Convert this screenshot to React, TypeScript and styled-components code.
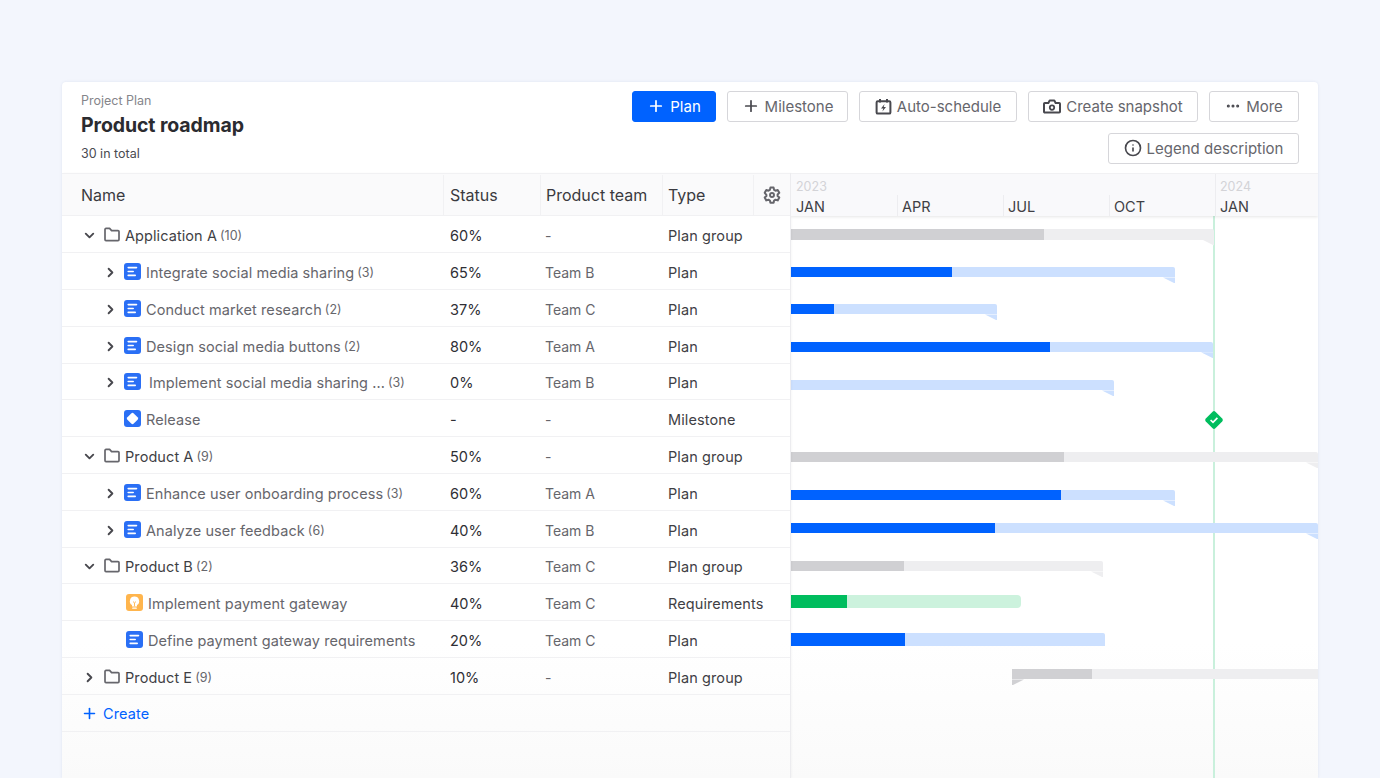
import React from "react";
import styled, { createGlobalStyle } from "styled-components";
import { ChevronDown, ChevronRight, Plus, Ellipsis, Info } from "lucide-react";

const Global = createGlobalStyle`
  html, body { margin: 0; padding: 0; height: 100%; }
  body { background: #f3f6fd; font-family: Inter, "Liberation Sans", sans-serif; overflow: hidden; }
  #root { height: 100%; }
`;

const Page = styled.div`
  height: 778px;
  padding: 82px 62px 0;
  box-sizing: border-box;
  overflow: hidden;
`;
const Card = styled.main`
  height: 696px;
  background: #fff;
  border-radius: 4px 4px 0 0;
  box-shadow: 0 0 3px rgba(40, 60, 120, 0.1);
  display: flex;
  flex-direction: column;
`;
const TopBar = styled.header`
  height: 91px;
  flex: none;
  display: flex;
  justify-content: space-between;
  padding: 9px 19px 0;
  box-sizing: border-box;
`;
const TitleBlock = styled.div`
  display: flex;
  flex-direction: column;
  padding-top: 1px;
`;
const Crumb = styled.div`
  font-size: 12.5px;
  line-height: 18px;
  color: #85858a;
`;
const Title = styled.h1`
  margin: 2px 0 0;
  font-size: 19.5px;
  line-height: 26px;
  font-weight: 700;
  color: #2b2b30;
  letter-spacing: -0.1px;
`;
const Total = styled.div`
  margin-top: 7px;
  font-size: 12.5px;
  line-height: 18px;
  color: #4a4a50;
`;
const Tools = styled.div`
  display: flex;
  flex-direction: column;
  align-items: flex-end;
  gap: 11px;
`;
const ToolRow = styled.div`
  display: flex;
  gap: 11px;
`;
const Btn = styled.button<{ $w: number; $primary?: boolean }>`
  width: ${(p) => p.$w}px;
  height: 31px;
  box-sizing: border-box;
  display: flex;
  align-items: center;
  justify-content: center;
  gap: 5px;
  padding: 0 0 1px;
  border-radius: 3px;
  border: 1px solid ${(p) => (p.$primary ? "#0062ff" : "#d6d6da")};
  background: ${(p) => (p.$primary ? "#0062ff" : "#fff")};
  color: ${(p) => (p.$primary ? "#fff" : "#66666c")};
  font: 400 15px Inter, sans-serif;
  svg { flex: none; color: ${(p) => (p.$primary ? "#fff" : "#48484e")}; }
`;
const Body = styled.div`
  flex: 1;
  display: flex;
  min-height: 0;
  background: linear-gradient(#fff 0, #fff 470px, #fafafa 100%);
`;
const TablePane = styled.section`
  width: 729px;
  flex: none;
  box-sizing: border-box;
  border-right: 1px solid #ececef;
  box-shadow: 1px 0 2px rgba(0, 0, 0, 0.03);
  position: relative;
  z-index: 1;
`;
const Cols = "382px 97px 122px 91px 36px";
const HeadRow = styled.div`
  height: 43.4px;
  padding-top: 1px;
  display: grid;
  grid-template-columns: ${Cols};
  background: #fafafb;
  border-top: 1px solid #f1f1f3;
  border-bottom: 1px solid #f1f1f3;
  box-sizing: border-box;
`;
const HeadCell = styled.div<{ $pad?: number }>`
  display: flex;
  align-items: center;
  padding-left: ${(p) => p.$pad ?? 6}px;
  font-size: 16px;
  color: #3a3a40;
  border-right: 1px solid #f1f1f3;
  &:last-child { border-right: 0; padding-left: 9px; }
  svg { color: #66666c; }
`;
const Row = styled.div`
  height: 36.8px;
  box-sizing: border-box;
  padding-top: 3px;
  display: grid;
  grid-template-columns: ${Cols};
  align-items: center;
  border-bottom: 1px solid #f1f1f3;
`;
const NameCell = styled.div<{ $indent: number }>`
  display: flex;
  align-items: center;
  padding-left: ${(p) => p.$indent}px;
  white-space: nowrap;
`;
const Twisty = styled.span`
  width: 16px;
  height: 16px;
  flex: none;
  display: flex;
  align-items: center;
  justify-content: center;
  color: #48484e;
`;
const KindIcon = styled.span<{ $gap: number; $left: number }>`
  display: flex;
  flex: none;
  margin-left: ${(p) => p.$left}px;
  margin-right: ${(p) => p.$gap}px;
  margin-top: -2px;
  color: #66666c;
`;
const Name = styled.span<{ $group?: boolean }>`
  font-size: 14.5px;
  letter-spacing: 0.08px;
  color: ${(p) => (p.$group ? "#3f3f45" : "#66666c")};
`;
const Count = styled.span`
  margin-left: 3px;
  font-size: 12.5px;
  color: #66666c;
`;
const Status = styled.div`
  padding-left: 6px;
  font-size: 14.5px;
  color: #2f2f35;
`;
const Team = styled.div`
  padding-left: 4px;
  font-size: 14px;
  color: #66666c;
`;
const Type = styled.div`
  padding-left: 5px;
  font-size: 14.5px;
  letter-spacing: 0.1px;
  color: #3f3f45;
`;
const CreateRow = styled.div`
  height: 36.8px;
  box-sizing: border-box;
  padding: 2px 0 0 19px;
  display: flex;
  align-items: center;
  gap: 5px;
  border-bottom: 1px solid #f1f1f3;
  color: #0062ff;
  font-size: 14.5px;
  letter-spacing: 0.1px;
`;
const GanttPane = styled.section`
  flex: 1;
  min-width: 0;
  position: relative;
  overflow: hidden;
`;
const GanttHead = styled.div`
  height: 43px;
  box-sizing: border-box;
  display: grid;
  grid-template-columns: repeat(4, 106px) 1fr;
  background: #f9f9fb;
  border-top: 1px solid #f1f1f3;
  box-shadow: 0 1px 3px rgba(0, 0, 0, 0.1);
  position: relative;
  z-index: 2;
`;
const Quarter = styled.div<{ $year?: string }>`
  display: flex;
  flex-direction: column;
  justify-content: flex-end;
  padding-left: 5px;
  position: relative;
  &::before {
    content: "";
    position: absolute;
    left: 0;
    bottom: 0;
    top: ${(p) => (p.$year ? 0 : "21px")};
    width: 1px;
    background: #ededf0;
  }
  &:first-child::before { display: none; }
`;
const Year = styled.span`
  font-size: 12.5px;
  line-height: 18px;
  margin-bottom: 2px;
  color: #d3d3d7;
`;
const Month = styled.span`
  font-size: 14.5px;
  line-height: 18px;
  color: #3f3f45;
`;
const GanttRow = styled.div`
  height: 36.8px;
  display: flex;
  align-items: flex-start;
`;
const Today = styled.div`
  position: absolute;
  left: 422px;
  top: 43px;
  bottom: 0;
  width: 2px;
  background: #c9f0dc;
`;
const Tones = {
  blue: ["#0062ff", "#cce0ff"],
  gray: ["#d0d0d3", "#eeeef0"],
  green: ["#00bd5e", "#ccf2dd"],
} as const;
const Bar = styled.div<{ $tone: keyof typeof Tones; $h: number; $tail?: "left" | "right"; $round?: boolean }>`
  display: flex;
  position: relative;
  height: ${(p) => p.$h}px;
  background: ${(p) => Tones[p.$tone][1]};
  border-radius: ${(p) => (p.$round ? "0 4px 4px 0" : p.$tail === "left" ? "2px 0 0 0" : "0 2px 0 0")};
  ${(p) =>
    p.$tail
      ? `&::after {
    content: "";
    position: absolute;
    top: 100%;
    ${p.$tail}: 0;
    width: 12px;
    height: 6px;
    background: ${p.$tail === "left" ? Tones[p.$tone][0] : Tones[p.$tone][1]};
    clip-path: polygon(${p.$tail === "left" ? "0 0, 100% 0, 0 100%" : "0 0, 100% 0, 100% 100%"});
  }`
      : ""}
`;
const Done = styled.div<{ $tone: keyof typeof Tones }>`
  height: 100%;
  background: ${(p) => Tones[p.$tone][0]};
`;
const Diamond = styled.span`
  display: flex;
  margin: 10.5px 0 0 413px;
  position: relative;
  z-index: 1;
`;

const PlanIcon = () => (
  <svg width="17" height="17" viewBox="0 0 17 17">
    <rect width="17" height="17" rx="3" fill="#2a6ff5" />
    <path d="M4.2 4.6h8.3M4.2 8.5h5M4.2 12.4h7" stroke="#fff" strokeWidth="1.6" strokeLinecap="round" />
  </svg>
);
const ReleaseIcon = () => (
  <svg width="17" height="17" viewBox="0 0 17 17">
    <rect width="17" height="17" rx="3" fill="#2a6ff5" />
    <rect x="4" y="4" width="9" height="9" rx="1.8" fill="#fff" transform="rotate(45 8.5 8.5)" />
  </svg>
);
const BulbIcon = () => (
  <svg width="17" height="17" viewBox="0 0 17 17">
    <rect width="17" height="17" rx="3" fill="#ffb54d" />
    <path d="M8.5 2.6a4.6 4.6 0 0 0-2.5 8.5V12.4h5v-1.3a4.6 4.6 0 0 0-2.5-8.5z" fill="#fff" />
    <path d="M6.8 14.2h3.4" stroke="#fff" strokeWidth="1.3" strokeLinecap="round" />
    <path d="M7 7.6l1.5 1.3L10 7.6M8.5 8.9V12.4" stroke="#ffb54d" strokeWidth="0.9" fill="none" />
  </svg>
);
const BoltCalendar = () => (
  <svg width="17" height="17" viewBox="0 0 17 17" fill="none">
    <rect x="1.6" y="3.2" width="13.8" height="12.4" rx="1.2" stroke="currentColor" strokeWidth="2" />
    <path d="M5 1v3.4M12 1v3.4" stroke="currentColor" strokeWidth="2" />
    <path d="M9.6 6L6 10.4h2.3l-.9 3.2 3.6-4.5H8.7z" fill="currentColor" />
  </svg>
);
const CameraIcon = () => (
  <svg width="18" height="17" viewBox="0 0 18 17" fill="none">
    <path d="M1.8 5h3.6l1.3-2.6h4.6L12.6 5h3.6c.4 0 .8.4.8.8v8c0 .4-.4.8-.8.8H1.8c-.4 0-.8-.4-.8-.8v-8c0-.4.4-.8.8-.8z" stroke="currentColor" strokeWidth="2" strokeLinejoin="round" />
    <circle cx="9" cy="9.6" r="2.2" stroke="currentColor" strokeWidth="1.8" />
  </svg>
);
const GearIcon = () => (
  <svg width="18" height="18" viewBox="0 0 18 18" fill="none">
    <path
      d="M7.4 1.6h3.2l.5 2.3 1.4.8 2.2-.7 1.6 2.8-1.7 1.6v1.6l1.7 1.6-1.6 2.8-2.2-.7-1.4.8-.5 2.3H7.4l-.5-2.3-1.4-.8-2.2.7-1.6-2.8 1.7-1.6V8.8L1.7 6.8l1.6-2.8 2.2.7 1.4-.8z"
      stroke="currentColor"
      strokeWidth="2"
      strokeLinejoin="round"
    />
    <circle cx="9" cy="9" r="2" stroke="currentColor" strokeWidth="1.9" />
  </svg>
);
const FolderIcon = () => (
  <svg width="16" height="15" viewBox="0 0 16 15" fill="none">
    <path d="M1 2.4c0-.5.4-1 1-1h3.6l2 2.2H14c.6 0 1 .4 1 1V12.6c0 .6-.4 1-1 1H2c-.6 0-1-.4-1-1z" stroke="currentColor" strokeWidth="1.7" strokeLinejoin="round" />
  </svg>
);
const MilestoneMark = () => (
  <svg width="20" height="20" viewBox="0 0 20 20">
    <rect x="3.2" y="3.2" width="13.6" height="13.6" rx="2" fill="#00bd5e" transform="rotate(45 10 10)" />
    <path d="M6.6 10l2.4 2.3 4.4-4.4" stroke="#fff" strokeWidth="1.7" fill="none" />
  </svg>
);

type Kind = "group" | "plan" | "release" | "bulb";
type Item = {
  kind: Kind; name: string; count?: number; open?: boolean; twisty?: boolean;
  status: string; team: string; type: string; gap?: number; indent?: number;
  bar?: { tone: keyof typeof Tones; start?: number; done: number; end: number; top: number; h?: number; tail?: "left" | "right"; round?: boolean };
};

const items: Item[] = [
  { kind: "group", name: "Application A", count: 10, open: true, twisty: true, status: "60%", team: "-", type: "Plan group", bar: { tone: "gray", done: 1044, end: 1214, top: 13, tail: "right" } },
  { kind: "plan", name: "Integrate social media sharing", count: 3, twisty: true, status: "65%", team: "Team B", type: "Plan", bar: { tone: "blue", done: 952, end: 1175, top: 14.2, tail: "right" } },
  { kind: "plan", name: "Conduct market research", count: 2, twisty: true, status: "37%", team: "Team C", type: "Plan", bar: { tone: "blue", done: 834, end: 997, top: 14.4, tail: "right" } },
  { kind: "plan", name: "Design social media buttons", count: 2, twisty: true, status: "80%", team: "Team A", type: "Plan", bar: { tone: "blue", done: 1050, end: 1213, top: 15.3, tail: "right" } },
  { kind: "plan", name: "Implement social media sharing ...", count: 3, twisty: true, gap: 8, status: "0%", team: "Team B", type: "Plan", bar: { tone: "blue", done: 791, end: 1114, top: 16.8, tail: "right" } },
  { kind: "release", name: "Release", status: "-", team: "-", type: "Milestone" },
  { kind: "group", name: "Product A", count: 9, open: true, twisty: true, status: "50%", team: "-", type: "Plan group", bar: { tone: "gray", done: 1064, end: 1330, top: 15.2, tail: "right" } },
  { kind: "plan", name: "Enhance user onboarding process", count: 3, twisty: true, status: "60%", team: "Team A", type: "Plan", bar: { tone: "blue", done: 1061, end: 1175, top: 16.4, tail: "right" } },
  { kind: "plan", name: "Analyze user feedback", count: 6, twisty: true, status: "40%", team: "Team B", type: "Plan", bar: { tone: "blue", done: 995, end: 1318, top: 12.6, tail: "right" } },
  { kind: "group", name: "Product B", count: 2, open: true, twisty: true, status: "36%", team: "Team C", type: "Plan group", bar: { tone: "gray", done: 904, end: 1103, top: 13.8, tail: "right" } },
  { kind: "bulb", name: "Implement payment gateway", indent: 64, gap: 5, status: "40%", team: "Team C", type: "Requirements", bar: { tone: "green", done: 847, end: 1021, top: 11, h: 13, round: true } },
  { kind: "plan", name: "Define payment gateway requirements", indent: 64, gap: 5, status: "20%", team: "Team C", type: "Plan", bar: { tone: "blue", done: 905, end: 1105, top: 12.5, h: 13 } },
  { kind: "group", name: "Product E", count: 9, twisty: true, status: "10%", team: "-", type: "Plan group", bar: { tone: "gray", start: 1012, done: 1092, end: 1330, top: 11.4, tail: "left" } },
];

const GANTT_X = 791;

const kindIcons: Record<Kind, React.ReactNode> = {
  group: <FolderIcon />,
  plan: <PlanIcon />,
  release: <ReleaseIcon />,
  bulb: <BulbIcon />,
};

const quarters = [
  { month: "JAN", year: "2023" },
  { month: "APR" },
  { month: "JUL" },
  { month: "OCT" },
  { month: "JAN", year: "2024" },
];

export default function App() {
  return (
    <Page>
      <Global />
      <Card>
        <TopBar>
          <TitleBlock>
            <Crumb>Project Plan</Crumb>
            <Title>Product roadmap</Title>
            <Total>30 in total</Total>
          </TitleBlock>
          <Tools>
            <ToolRow>
              <Btn $w={84} $primary><Plus size={18} strokeWidth={2.3} />Plan</Btn>
              <Btn $w={121}><Plus size={18} strokeWidth={2.3} />Milestone</Btn>
              <Btn $w={158}><BoltCalendar />Auto-schedule</Btn>
              <Btn $w={170}><CameraIcon />Create snapshot</Btn>
              <Btn $w={90}><Ellipsis size={16} strokeWidth={2.6} />More</Btn>
            </ToolRow>
            <Btn $w={191}><Info size={18} strokeWidth={2.2} />Legend description</Btn>
          </Tools>
        </TopBar>
        <Body>
          <TablePane>
            <HeadRow>
              <HeadCell $pad={19}>Name</HeadCell>
              <HeadCell>Status</HeadCell>
              <HeadCell $pad={5}>Product team</HeadCell>
              <HeadCell $pad={5}>Type</HeadCell>
              <HeadCell><GearIcon /></HeadCell>
            </HeadRow>
            {items.map((it) => (
              <Row key={it.name}>
                <NameCell $indent={it.indent ?? (it.kind === "group" ? 19 : 40)}>
                  {it.twisty || !it.indent ? (
                    <Twisty>
                      {it.twisty &&
                        (it.open ? <ChevronDown size={15} strokeWidth={3} /> : <ChevronRight size={15} strokeWidth={3} />)}
                    </Twisty>
                  ) : null}
                  <KindIcon $gap={it.gap ?? 5} $left={it.kind === "group" ? 7 : it.indent ? 0 : 8 - 2}>
                    {kindIcons[it.kind]}
                  </KindIcon>
                  <Name $group={it.kind === "group"}>{it.name}</Name>
                  {it.count !== undefined && <Count>({it.count})</Count>}
                </NameCell>
                <Status>{it.status}</Status>
                <Team>{it.team}</Team>
                <Type>{it.type}</Type>
              </Row>
            ))}
            <CreateRow><Plus size={17} strokeWidth={2.3} />Create</CreateRow>
          </TablePane>
          <GanttPane>
            <GanttHead>
              {quarters.map((q, i) => (
                <Quarter key={i} $year={q.year}>
                  {q.year && <Year>{q.year}</Year>}
                  <Month>{q.month}</Month>
                </Quarter>
              ))}
            </GanttHead>
            <Today />
            {items.map((it) => {
              const b = it.bar;
              const start = b?.start ?? GANTT_X;
              return (
                <GanttRow key={it.name}>
                  {b ? (
                    <Bar
                      $tone={b.tone}
                      $h={b.h ?? 10.5}
                      $tail={b.tail}
                      $round={b.round}
                      style={{ marginTop: b.top, marginLeft: start - GANTT_X, width: b.end - start }}
                    >
                      <Done $tone={b.tone} style={{ width: b.done - start }} />
                    </Bar>
                  ) : (
                    <Diamond><MilestoneMark /></Diamond>
                  )}
                </GanttRow>
              );
            })}
          </GanttPane>
        </Body>
      </Card>
    </Page>
  );
}
